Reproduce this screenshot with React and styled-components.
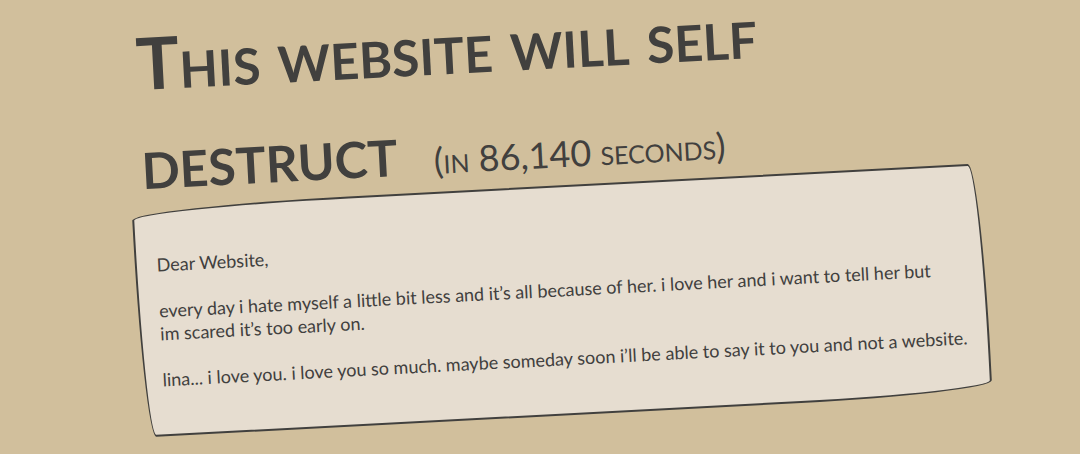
import styled, { createGlobalStyle } from 'styled-components';

const GlobalStyle = createGlobalStyle`
  * {
    box-sizing: border-box;
  }

  html {
    background: #d1bf9c;
  }

  body {
    display: flow-root;
    min-height: 100vh;
    margin: 0;
    color: #41403e;
    font-family: Lato, 'Liberation Sans', sans-serif;
    font-size: 18px;
    line-height: 23px;
  }
`;

const Page = styled.main`
  max-width: 850px;
  margin: -8px auto 0;
  transform: rotate(-3deg);
  transform-origin: 50% -112px;
`;

const Title = styled.h1`
  margin: 0 0 -4px;
  padding: 0 12px;
  font-size: 72px;
  font-weight: 700;
  font-variant: small-caps;
  line-height: 99px;
`;

const Countdown = styled.span`
  margin-left: 36px;
  font-size: 36px;
  font-weight: 400;
  line-height: 1;
`;

const Letter = styled.article`
  padding: 45px 16px 43px 20px;
  background: #e6ddd0;
  border: 2px solid #41403e;
  /* uneven corners give the hand drawn outline */
  border-radius: 255px 15px 225px 15px / 15px 225px 15px 255px;
`;

const Paragraph = styled.p`
  margin: 0 0 23px;
  white-space: pre-line;

  &:last-child {
    margin-bottom: 0;
  }
`;

const paragraphs = [
  'Dear Website,',
  'every day i hate myself a little bit less and it’s all because of her. i love her and i want to tell her but\nim scared it’s too early on.',
  'lina... i love you. i love you so much. maybe someday soon i’ll be able to say it to you and not a website.',
];

const App = () => {
  const seconds = 86140;

  return (
    <>
      <GlobalStyle />
      <Page>
        <Title>
          This website will self destruct
          <Countdown>(in {seconds.toLocaleString('en-US')} seconds)</Countdown>
        </Title>
        <Letter>
          {paragraphs.map((text) => (
            <Paragraph key={text}>{text}</Paragraph>
          ))}
        </Letter>
      </Page>
    </>
  );
};

export default App;
